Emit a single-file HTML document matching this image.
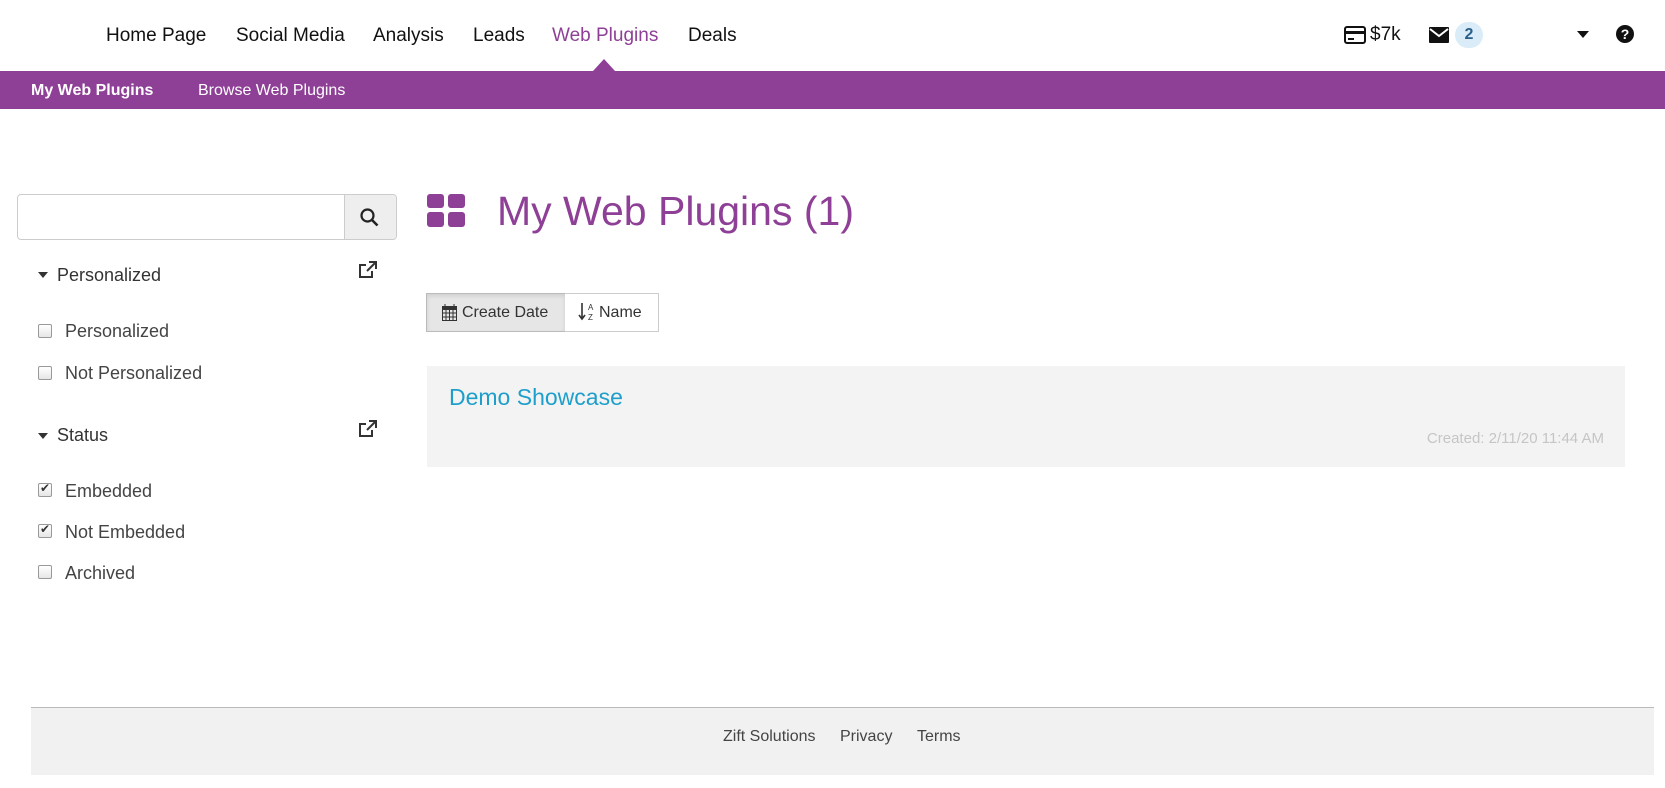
<!DOCTYPE html>
<html><head><meta charset="utf-8"><style>
*{box-sizing:border-box;margin:0;padding:0}
body{width:1665px;height:788px;background:#fff;font-family:"Liberation Sans",sans-serif;color:#222;position:relative;overflow:hidden}
.a{position:absolute;white-space:nowrap}
.nav{font-size:19px;top:25px;color:#111}
.bar{position:absolute;left:0;top:71px;width:1665px;height:38px;background:#8e3f96}
.sub{font-size:16px;color:#fff;top:82px}
.lbl{font-size:18px;color:#444}
.cb{position:absolute;width:14px;height:14px;border:1px solid #999;border-radius:2px;background:linear-gradient(#fff,#e6e6e6);left:38px}
.cb.on::after{content:"✔";position:absolute;left:1px;top:-3px;font-size:12px;color:#333}
.car{position:absolute;left:38px;border-left:5px solid transparent;border-right:5px solid transparent;border-top:6px solid #333}
</style></head><body>
<div class="a nav" style="left:106px">Home Page</div>
<div class="a nav" style="left:236px">Social Media</div>
<div class="a nav" style="left:373px">Analysis</div>
<div class="a nav" style="left:473px">Leads</div>
<div class="a nav" style="left:552px;color:#8e3f96">Web Plugins</div>
<div class="a nav" style="left:688px">Deals</div>
<div class="a" style="left:593px;top:59px;width:0;height:0;border-left:11px solid transparent;border-right:11px solid transparent;border-bottom:12px solid #8e3f96"></div>

<svg class="a" style="left:1344px;top:26px" width="22" height="18" viewBox="0 0 22 18"><rect x="1" y="1" width="20" height="16" rx="2" fill="none" stroke="#111" stroke-width="2"/><rect x="1" y="5" width="20" height="3" fill="#111"/><rect x="4" y="12" width="6" height="2" fill="#111"/></svg>
<div class="a" style="left:1370px;top:24px;font-size:19px;color:#111">$7k</div>
<svg class="a" style="left:1429px;top:27px" width="20" height="16" viewBox="0 0 20 16"><rect x="0" y="0" width="20" height="16" rx="1" fill="#111"/><path d="M1 2 L10 9 L19 2" stroke="#fff" stroke-width="2" fill="none"/></svg>
<div class="a" style="left:1455px;top:22px;width:28px;height:26px;border-radius:13px;background:#d9ecf7;color:#2a5f8a;font-weight:bold;font-size:16px;text-align:center;line-height:26px">2</div>
<div class="a" style="left:1577px;top:31px;border-left:6px solid transparent;border-right:6px solid transparent;border-top:7px solid #111"></div>
<div class="a" style="left:1616px;top:25px;width:18px;height:18px;border-radius:50%;background:#111;color:#fff;font-weight:bold;font-size:14px;text-align:center;line-height:18px">?</div>

<div class="bar"></div>
<div class="a sub" style="left:31px;font-weight:bold">My Web Plugins</div>
<div class="a sub" style="left:198px">Browse Web Plugins</div>

<div class="a" style="left:17px;top:194px;width:380px;height:46px;border:1px solid #ccc;border-radius:4px;overflow:hidden"><div style="position:absolute;right:0;top:0;width:52px;height:100%;background:#eee;border-left:1px solid #ccc"></div>
<svg style="position:absolute;right:17px;top:13px" width="19" height="19" viewBox="0 0 19 19"><circle cx="7.5" cy="7.5" r="6" stroke="#222" stroke-width="2.2" fill="none"/><path d="M12 12 L17.5 17.5" stroke="#222" stroke-width="2.6"/></svg></div>

<div class="car" style="top:272px"></div>
<div class="a lbl" style="left:57px;top:265px;color:#333">Personalized</div>
<svg class="a" style="left:358px;top:261px" width="20" height="19" viewBox="0 0 20 19"><path d="M14 10 v6 h-12 v-12 h6" stroke="#333" stroke-width="2" fill="none"/><path d="M11 1 h7 v7 M18 1 L9 10" stroke="#333" stroke-width="2" fill="none"/></svg>
<div class="cb" style="top:324px"></div><div class="a lbl" style="left:65px;top:321px">Personalized</div>
<div class="cb" style="top:366px"></div><div class="a lbl" style="left:65px;top:363px">Not Personalized</div>
<div class="car" style="top:433px"></div>
<div class="a lbl" style="left:57px;top:425px;color:#333">Status</div>
<svg class="a" style="left:358px;top:420px" width="20" height="19" viewBox="0 0 20 19"><path d="M14 10 v6 h-12 v-12 h6" stroke="#333" stroke-width="2" fill="none"/><path d="M11 1 h7 v7 M18 1 L9 10" stroke="#333" stroke-width="2" fill="none"/></svg>
<div class="cb on" style="top:483px"></div><div class="a lbl" style="left:65px;top:481px">Embedded</div>
<div class="cb on" style="top:524px"></div><div class="a lbl" style="left:65px;top:522px">Not Embedded</div>
<div class="cb" style="top:565px"></div><div class="a lbl" style="left:65px;top:563px">Archived</div>

<svg class="a" style="left:427px;top:194px" width="38" height="33" viewBox="0 0 38 33"><rect x="0" y="0" width="17" height="14" rx="3" fill="#8e3f96"/><rect x="21" y="0" width="17" height="14" rx="3" fill="#8e3f96"/><rect x="0" y="18" width="17" height="15" rx="3" fill="#8e3f96"/><rect x="21" y="18" width="17" height="15" rx="3" fill="#8e3f96"/></svg>
<div class="a" style="left:497px;top:188px;font-size:41px;color:#8e3f96">My Web Plugins (1)</div>

<div class="a" style="left:426px;top:293px;width:140px;height:39px;background:#e6e6e6;border:1px solid #bbb;box-shadow:inset 0 2px 4px rgba(0,0,0,.1);font-size:16px;line-height:37px;padding-left:35px;color:#333">Create Date</div>
<svg class="a" style="left:442px;top:304px" width="15" height="17" viewBox="0 0 15 17"><rect x="0.5" y="2.5" width="14" height="14" fill="none" stroke="#333"/><rect x="0" y="2" width="15" height="4" fill="#333"/><path d="M3 0v4M12 0v4M0 9h15M0 13h15M4 6v11M7.5 6v11M11 6v11" stroke="#333" stroke-width="1"/></svg>
<div class="a" style="left:565px;top:293px;width:94px;height:39px;background:#fff;border:1px solid #ccc;border-left:none;font-size:16px;line-height:37px;padding-left:34px;color:#333">Name</div>
<svg class="a" style="left:578px;top:302px" width="18" height="20" viewBox="0 0 18 20"><path d="M4 1v16M1 13l3 4 3-4" stroke="#333" stroke-width="1.6" fill="none"/><text x="10" y="8" font-size="8" font-family="Liberation Sans" fill="#333">A</text><text x="10" y="18" font-size="8" font-family="Liberation Sans" fill="#333">Z</text></svg>

<div class="a" style="left:427px;top:366px;width:1198px;height:101px;background:#f3f3f3"></div>
<div class="a" style="left:449px;top:384px;font-size:23px;color:#1e9fcb">Demo Showcase</div>
<div class="a" style="right:61px;top:430px;font-size:15px;color:#c5c5c5">Created: 2/11/20 11:44 AM</div>

<div class="a" style="left:31px;top:707px;width:1623px;height:68px;background:#f1f1f1;border-top:1px solid #bbb"></div>
<div class="a" style="left:723px;top:728px;font-size:16px;color:#444">Zift Solutions</div>
<div class="a" style="left:840px;top:728px;font-size:16px;color:#444">Privacy</div>
<div class="a" style="left:917px;top:728px;font-size:16px;color:#444">Terms</div>
</body></html>
